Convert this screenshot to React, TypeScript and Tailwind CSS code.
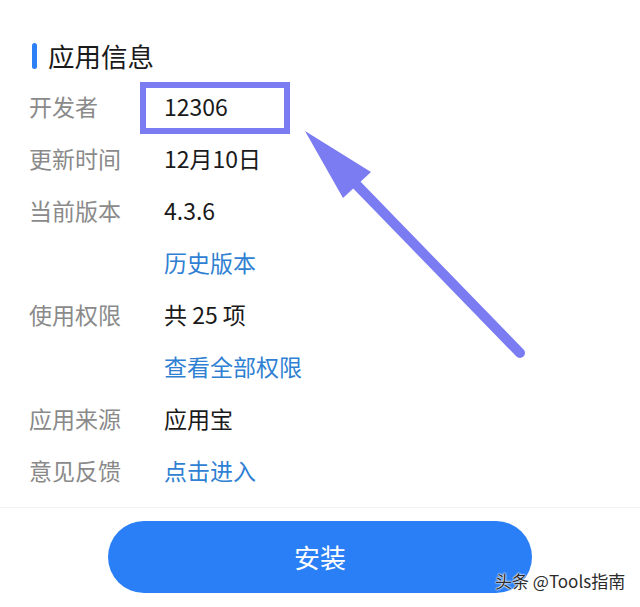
import React from "react";

type Row = { label?: string; value: string; kind?: "text" | "link" };

const rows: Row[] = [
  { label: "开发者", value: "12306" },
  { label: "更新时间", value: "12月10日" },
  { label: "当前版本", value: "4.3.6" },
  { value: "历史版本", kind: "link" },
  { label: "使用权限", value: "共 25 项" },
  { value: "查看全部权限", kind: "link" },
  { label: "应用来源", value: "应用宝" },
  { label: "意见反馈", value: "点击进入", kind: "link" },
];

const font = { fontFamily: '"Noto Sans CJK SC", "Noto Sans", sans-serif' };

export default function App() {
  return (
    <div className="relative w-[640px] h-[607px] bg-white overflow-hidden" style={font}>
      {/* section header */}
      <div className="flex items-center h-[34px] mt-[39px] pl-[32px]">
        <div className="w-[5px] h-[26px] rounded-full bg-[#2d7ff5]" />
        <div className="ml-[11px] text-[26.5px] leading-none text-[#1a1a1a]">应用信息</div>
      </div>

      {/* info rows */}
      <div className="mt-[7px] flex flex-col">
        {rows.map((r, i) => (
          <div key={i} className="flex items-center h-[52px]">
            <div className="w-[164px] pl-[29px] text-[23px] leading-none text-[#8a8a8a]">{r.label ?? ""}</div>
            <div
              className={
                r.kind === "link"
                  ? "text-[23px] leading-none text-[#2f7fd3]"
                  : "text-[23px] leading-none text-[#1a1a1a]"
              }
            >
              {r.value}
            </div>
          </div>
        ))}
      </div>

      <div className="mt-[11px] h-px bg-[#f2f2f2]" />

      {/* install button */}
      <div className="flex justify-center mt-[13px]">
        <button className="w-[424px] h-[72px] rounded-full bg-[#2a7ff6] text-white text-[26px] leading-none">
          安装
        </button>
      </div>

      {/* highlight frame around the developer value */}
      <div className="absolute left-[140px] top-[82px] w-[150px] h-[52px] border-[6px] border-[#7b7cf2]" />

      {/* pointer arrow */}
      <svg className="absolute left-0 top-0" width="640" height="607" viewBox="0 0 640 607">
        <line x1="520" y1="353" x2="350" y2="178" stroke="#7b7cf2" strokeWidth="10" strokeLinecap="round" />
        <polygon points="305,131 371,172 343,198" fill="#7b7cf2" />
      </svg>

      {/* watermark */}
      <div
        className="absolute left-[495px] top-[572px] text-[17px] leading-none text-[#2b2b2b]"
        style={{ textShadow: "0 0 2px #fff, 0 0 2px #fff, 0 0 1px #fff" }}
      >
        头条 @Tools指南
      </div>
    </div>
  );
}
